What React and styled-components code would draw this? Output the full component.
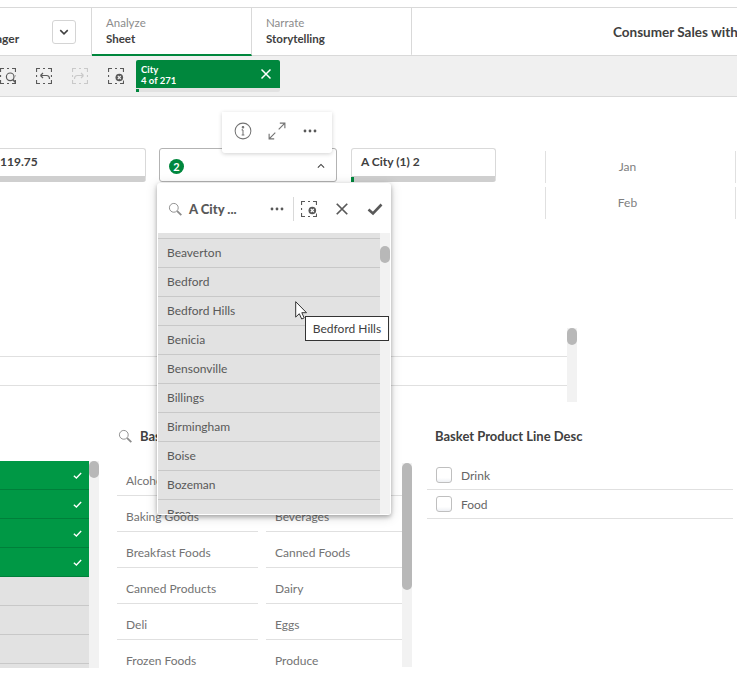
import React from "react";
import styled, { createGlobalStyle } from "styled-components";

const GlobalStyle = createGlobalStyle`
  html, body {
    margin: 0;
    padding: 0;
    background: #fff;
  }
  body {
    font-family: "Lato", "Liberation Sans", sans-serif;
    font-size: 12px;
    color: #404040;
  }
`;

const Page = styled.div`
  position: relative;
  width: 737px;
  height: 674px;
  overflow: hidden;
  background: #fff;
`;

const Header = styled.header`
  display: flex;
  height: 47px;
  margin-top: 7px;
  border-top: 1px solid #d9d9d9;
  border-bottom: 1px solid #d9d9d9;
  box-sizing: content-box;
`;

const ManagerTab = styled.div`
  display: flex;
  align-items: center;
  width: 91px;
  border-right: 1px solid #d9d9d9;
  overflow: hidden;
`;

const ManagerLabel = styled.span`
  width: 56px;
  margin-left: -4px;
  padding-top: 14px;
  font-weight: 700;
  font-size: 12px;
  text-align: left;
  color: #404040;
`;

const MenuButton = styled.div`
  display: flex;
  align-items: center;
  justify-content: center;
  width: 22px;
  height: 22px;
  border: 1px solid #d4d4d4;
  border-radius: 3px;
`;

const Tab = styled.div`
  display: flex;
  flex-direction: column;
  justify-content: center;
  gap: 1px;
  box-sizing: border-box;
  width: 160px;
  height: 48px;
  padding: 0 0 2px 14px;
  border-right: 1px solid #d9d9d9;
  border-bottom: 2px solid ${(p) => (p.$active ? "#00873d" : "transparent")};
  font-size: 11.5px;
`;

const TabKicker = styled.span`
  color: #8c8c8c;
  line-height: 15px;
`;

const TabName = styled.span`
  color: #404040;
  font-weight: 700;
  line-height: 15px;
`;

const AppTitle = styled.div`
  flex: 1;
  padding-left: 201px;
  font-size: 13.5px;
  font-weight: 700;
  line-height: 48px;
  color: #404040;
  white-space: nowrap;
  overflow: hidden;
`;

const Toolbar = styled.div`
  display: flex;
  align-items: center;
  height: 40px;
  border-bottom: 1px solid #d9d9d9;
  background: #f0f0f0;
`;

const ToolIcons = styled.div`
  display: flex;
  gap: 20px;
`;

const Pill = styled.div`
  position: relative;
  display: flex;
  align-items: center;
  justify-content: space-between;
  box-sizing: border-box;
  width: 144px;
  height: 32px;
  margin-left: 12px;
  padding: 0 8px 0 5px;
  border-bottom: 4px solid #e2e2e2;
  border-radius: 2px;
  background: #00873d;
  background-clip: padding-box;
  color: #fff;

  &::after {
    content: "";
    position: absolute;
    left: 0;
    bottom: -4px;
    width: 3px;
    height: 3px;
    background: #00873d;
  }
`;

const PillText = styled.div`
  display: flex;
  flex-direction: column;
  padding-top: 2px;
  font-size: 9.5px;
  font-weight: 700;
  line-height: 11.5px;
`;

const FilterRow = styled.div`
  display: flex;
  align-items: flex-start;
  height: 72px;
  margin-top: 51px;
`;

const FilterBox = styled.div`
  position: relative;
  display: flex;
  align-items: center;
  justify-content: space-between;
  flex-shrink: 0;
  box-sizing: border-box;
  width: ${(p) => p.$width}px;
  height: 34px;
  margin: 0 ${(p) => p.$after || 0}px 0 ${(p) => p.$before || 0}px;
  padding: ${(p) => (p.$open ? "2px 10px 0 9px" : "0 10px 2px 9px")};
  border: 1px solid ${(p) => (p.$open ? "#b3b3b3" : "#d9d9d9")};
  border-bottom-width: ${(p) => (p.$open ? 1 : 6)}px;
  border-bottom-color: ${(p) => (p.$open ? "#b3b3b3" : "#cfcfcf")};
  border-radius: 3px;
  background: #fff;
  font-size: 12px;
  font-weight: 700;
  color: #404040;
`;

const ProgressMark = styled.span`
  position: absolute;
  left: -1px;
  bottom: -6px;
  width: 3px;
  height: 5px;
  background: #00873d;
`;

const Badge = styled.span`
  display: flex;
  align-items: center;
  justify-content: center;
  width: 15px;
  height: 15px;
  border-radius: 50%;
  background: #00873d;
  color: #fff;
  font-size: 11px;
  font-weight: 700;
`;

const Months = styled.div`
  display: flex;
  flex-direction: column;
  gap: 4px;
  margin: 3px 0 0 49px;
`;

const MonthCell = styled.div`
  box-sizing: border-box;
  width: 191px;
  height: 32px;
  border-left: 1px solid #e0e0e0;
  border-right: 1px solid #e0e0e0;
  padding: 8px 26px 0 0;
  text-align: center;
  font-size: 12px;
  color: #808080;
  line-height: 16px;
`;

const TableArea = styled.section`
  display: flex;
  width: 577px;
  height: 182px;
`;

const TableRows = styled.div`
  flex: 1;
  padding-top: 136px;
`;

const TableRow = styled.div`
  height: 28px;
  border-top: 1px solid #e0e0e0;
`;

const ScrollTrack = styled.div`
  flex-shrink: 0;
  box-sizing: border-box;
  width: 10px;
  height: ${(p) => p.$height}px;
  margin-top: ${(p) => p.$top || 0}px;
  background: #f2f2f2;
`;

const ScrollThumb = styled.div`
  width: 10px;
  height: ${(p) => p.$height}px;
  margin-top: ${(p) => p.$offset || 0}px;
  border-radius: 5px;
  background: #b8b8b8;
`;

const Bottom = styled.section`
  display: flex;
  align-items: flex-start;
  height: 272px;
`;

const SelectedPanel = styled.div`
  display: flex;
  width: 99px;
  height: 207px;
  margin-top: 59px;
  margin-right: 18px;
`;

const SelectedRows = styled.div`
  width: 89px;
  height: 207px;
  overflow: hidden;
`;

const ValueRow = styled.div`
  display: flex;
  align-items: center;
  justify-content: flex-end;
  box-sizing: border-box;
  height: 29px;
  padding-right: 7px;
  border-bottom: 1px solid ${(p) => (p.$selected ? "#007f3a" : "#c8c8c8")};
  background: ${(p) => (p.$selected ? "#009845" : "#e2e2e2")};
`;

const GroupPanel = styled.div`
  width: 295px;
  margin-right: 15px;
`;

const PanelTitle = styled.div`
  display: flex;
  align-items: center;
  gap: 7px;
  box-sizing: border-box;
  height: 58px;
  padding: 26px 0 16px ${(p) => p.$inset || 0}px;
  font-size: 13px;
  font-weight: 700;
  color: #404040;
`;

const GroupBody = styled.div`
  display: flex;
  height: 207px;
  overflow: hidden;
`;

const GroupColumn = styled.div`
  flex-shrink: 0;
  width: ${(p) => p.$width}px;
  margin-right: ${(p) => p.$after || 0}px;
`;

const GroupItem = styled.div`
  box-sizing: border-box;
  height: 36px;
  padding-left: 9px;
  border-bottom: 1px solid #e0e0e0;
  font-size: 12px;
  line-height: 41px;
  color: #737373;
  white-space: nowrap;
`;

const LinePanel = styled.div`
  width: 306px;
`;

const LineRows = styled.div`
  padding-top: 1px;
`;

const LineRow = styled.div`
  display: flex;
  align-items: center;
  gap: 9px;
  box-sizing: border-box;
  height: 29px;
  padding-left: 9px;
  border-bottom: 1px solid #e0e0e0;
  font-size: 12px;
  color: #666;
`;

const CheckBox = styled.span`
  box-sizing: border-box;
  width: 16px;
  height: 16px;
  border: 1px solid #bfbfbf;
  border-radius: 3px;
  background: linear-gradient(#fff 70%, #eef0f4);
`;

const ObjectTools = styled.div`
  position: absolute;
  left: 222px;
  top: 112px;
  display: flex;
  align-items: center;
  gap: 16px;
  box-sizing: border-box;
  width: 110px;
  height: 41px;
  padding: 0 0 4px 12px;
  border-radius: 0 0 3px 3px;
  background: #fff;
  box-shadow: 0 1px 4px rgba(0, 0, 0, 0.18);
`;

const Popover = styled.div`
  position: absolute;
  left: 157px;
  top: 183px;
  box-sizing: border-box;
  width: 234px;
  height: 332px;
  padding: 0 1px;
  border-radius: 3px;
  background: #fff;
  box-shadow: 0 2px 4px rgba(0, 0, 0, 0.28), 0 2px 12px rgba(0, 0, 0, 0.16);
`;

const PopoverHead = styled.div`
  display: flex;
  align-items: center;
  box-sizing: border-box;
  height: 50px;
  padding: 2px 0 0 10px;
`;

const PopoverTitle = styled.span`
  width: 80px;
  margin-left: 6px;
  font-size: 13px;
  font-weight: 900;
  color: #595959;
  white-space: nowrap;
`;

const HeadDivider = styled.span`
  width: 1px;
  height: 24px;
  margin: 0 7px 0 8px;
  background: #d9d9d9;
`;

const HeadActions = styled.div`
  display: flex;
  align-items: center;
  gap: 18px;
`;

const PopoverBody = styled.div`
  display: flex;
  height: 281px;
  overflow: hidden;
  background: #f2f2f2;
`;

const CityList = styled.div`
  width: 222px;
  height: 281px;
  overflow: hidden;
  background: #e2e2e2;
`;

const CityRow = styled.div`
  box-sizing: border-box;
  height: 29px;
  padding-left: 9px;
  border-bottom: 1px solid #c8c8c8;
  font-size: 12px;
  line-height: 28px;
  color: #595959;

  &:first-child {
    height: 6px;
  }
`;

const Tooltip = styled.div`
  position: absolute;
  left: 305px;
  top: 316px;
  box-sizing: border-box;
  width: 84px;
  height: 25px;
  border: 1px solid #333;
  background: #fff;
  font-size: 12px;
  line-height: 23px;
  text-align: center;
  color: #404040;
`;

const Cursor = styled.svg`
  position: absolute;
  left: 295px;
  top: 301px;
`;

const Glyph = ({ size = 16, children, color = "#595959", sw = 1.2 }) => (
  <svg width={size} height={size} viewBox="0 0 16 16" fill="none" stroke={color} strokeWidth={sw}>
    {children}
  </svg>
);

const FRAME = "M.5 4V.5H4M7 .5h2M12 .5h3.5V4M15.5 7v2M15.5 12v3.5H12M9 15.5H7M4 15.5H.5V12M.5 9V7";

const SelectFrame = ({ color, children }) => (
  <Glyph color={color}>
    <path d={FRAME} />
    {children}
  </Glyph>
);

const SearchSmall = ({ color = "#8c8c8c" }) => (
  <Glyph size={15} color={color} sw={1}>
    <circle cx="6.2" cy="6.2" r="4.7" />
    <path d="M9.8 9.8l4.4 4.2" strokeWidth="2" />
  </Glyph>
);

const ClearMark = ({ bg = "#f0f0f0" }) => (
  <>
    <circle cx="11.3" cy="9.5" r="5.2" fill={bg} stroke="none" />
    <circle cx="11.3" cy="9.5" r="3.8" fill="#595959" stroke="none" />
    <path d="M9.8 8l3 3M12.8 8l-3 3" stroke={bg} strokeWidth="1.1" />
  </>
);

const Cross = ({ size = 14, color = "#595959", sw = 2 }) => (
  <Glyph size={size} color={color} sw={sw}>
    <path d="M2 2l12 12M14 2L2 14" />
  </Glyph>
);

const Dots = () => (
  <Glyph>
    <circle cx="3" cy="8" r="1.4" fill="#595959" stroke="none" />
    <circle cx="8" cy="8" r="1.4" fill="#595959" stroke="none" />
    <circle cx="13" cy="8" r="1.4" fill="#595959" stroke="none" />
  </Glyph>
);

const Tick = ({ size = 16, color = "#595959", sw = 2.6 }) => (
  <Glyph size={size} color={color} sw={sw}>
    <path d="M1.5 8.5l4.5 4 8.5-9" />
  </Glyph>
);

const CITIES = ["", "Beaverton", "Bedford", "Bedford Hills", "Benicia", "Bensonville", "Billings", "Birmingham", "Boise", "Bozeman", "Brea"];
const GROUP_A = ["Alcoholic Beverages", "Baking Goods", "Breakfast Foods", "Canned Products", "Deli", "Frozen Foods"];
const GROUP_B = ["Baked Goods", "Beverages", "Canned Foods", "Dairy", "Eggs", "Produce"];

export default function App() {
  return (
    <Page>
      <GlobalStyle />
      <Header>
        <ManagerTab>
          <ManagerLabel>ager</ManagerLabel>
          <MenuButton>
            <Glyph size={12} color="#404040" sw={2}>
              <path d="M3 5.5l5 5 5-5" />
            </Glyph>
          </MenuButton>
        </ManagerTab>
        <Tab $active>
          <TabKicker>Analyze</TabKicker>
          <TabName>Sheet</TabName>
        </Tab>
        <Tab>
          <TabKicker>Narrate</TabKicker>
          <TabName>Storytelling</TabName>
        </Tab>
        <AppTitle>Consumer Sales with</AppTitle>
      </Header>

      <Toolbar>
        <ToolIcons>
          <SelectFrame>
            <circle cx="10.5" cy="9" r="5.4" fill="#f0f0f0" stroke="none" />
            <circle cx="10.2" cy="8.8" r="3.8" />
            <path d="M12.8 11.6l3 3" strokeWidth="1.6" />
          </SelectFrame>
          <SelectFrame>
            <path d="M4.5 7.5h6c2 0 3 1.3 3 3.5M4.5 7.5l2.5-2.5M4.5 7.5L7 10" />
          </SelectFrame>
          <SelectFrame color="#c9c9c9">
            <path d="M11.5 7.5h-6c-2 0-3 1.3-3 3.5M11.5 7.5L9 5M11.5 7.5L9 10" />
          </SelectFrame>
          <SelectFrame>
            <ClearMark />
          </SelectFrame>
        </ToolIcons>
        <Pill>
          <PillText>
            <span>City</span>
            <span>4 of 271</span>
          </PillText>
          <Cross size={12} color="#fff" />
        </Pill>
      </Toolbar>

      <FilterRow>
        <FilterBox $width={156} $before={-10} $after={13}>
          119.75
        </FilterBox>
        <FilterBox $width={178} $after={14} $open>
          <Badge>2</Badge>
          <Glyph size={10} color="#404040" sw={1.8}>
            <path d="M3 10.5l5-5 5 5" />
          </Glyph>
        </FilterBox>
        <FilterBox $width={145}>
          A City (1) 2
          <ProgressMark />
        </FilterBox>
        <Months>
          <MonthCell>Jan</MonthCell>
          <MonthCell>Feb</MonthCell>
        </Months>
      </FilterRow>

      <TableArea>
        <TableRows>
          <TableRow />
          <TableRow />
        </TableRows>
        <ScrollTrack $top={108} $height={74}>
          <ScrollThumb $height={17} />
        </ScrollTrack>
      </TableArea>

      <Bottom>
        <SelectedPanel>
          <SelectedRows>
            {[0, 1, 2, 3].map((i) => (
              <ValueRow key={i} $selected>
                <Tick size={9} color="#fff" sw={2.4} />
              </ValueRow>
            ))}
            {[4, 5, 6, 7].map((i) => (
              <ValueRow key={i} />
            ))}
          </SelectedRows>
          <ScrollTrack $height={207}>
            <ScrollThumb $height={17} />
          </ScrollTrack>
        </SelectedPanel>

        <GroupPanel>
          <PanelTitle $inset={1}>
            <SearchSmall />
            Basket Product
          </PanelTitle>
          <GroupBody>
            <GroupColumn $width={141} $after={8}>
              {GROUP_A.map((g) => (
                <GroupItem key={g}>{g}</GroupItem>
              ))}
            </GroupColumn>
            <GroupColumn $width={136}>
              {GROUP_B.map((g) => (
                <GroupItem key={g}>{g}</GroupItem>
              ))}
            </GroupColumn>
            <ScrollTrack $height={204} $top={3}>
              <ScrollThumb $height={127} />
            </ScrollTrack>
          </GroupBody>
        </GroupPanel>

        <LinePanel>
          <PanelTitle $inset={8}>Basket Product Line Desc</PanelTitle>
          <LineRows>
            <LineRow>
              <CheckBox />
              Drink
            </LineRow>
            <LineRow>
              <CheckBox />
              Food
            </LineRow>
          </LineRows>
        </LinePanel>
      </Bottom>

      <ObjectTools>
        <Glyph size={18} color="#737373" sw={0.9}>
          <circle cx="8" cy="8" r="7" />
          <path d="M8 7v4.5M6.8 11.5h2.4M6.8 7H8" />
          <circle cx="8" cy="4.6" r="0.7" fill="#737373" />
        </Glyph>
        <Glyph size={18} color="#737373" sw={1}>
          <path d="M9.5 6.5L15 1M10.5 1H15v4.5M6.5 9.5L1 15M1 10.5V15h4.5" />
        </Glyph>
        <Dots />
      </ObjectTools>

      <Popover>
        <PopoverHead>
          <SearchSmall />
          <PopoverTitle>A City ...</PopoverTitle>
          <Dots />
          <HeadDivider />
          <HeadActions>
            <SelectFrame>
              <ClearMark bg="#fff" />
            </SelectFrame>
            <Cross />
            <Tick />
          </HeadActions>
        </PopoverHead>
        <PopoverBody>
          <CityList>
            {CITIES.map((c, i) => (
              <CityRow key={i}>{c}</CityRow>
            ))}
          </CityList>
          <ScrollTrack $height={281}>
            <ScrollThumb $height={17} $offset={13} />
          </ScrollTrack>
        </PopoverBody>
      </Popover>

      <Cursor width="12" height="19" viewBox="0 0 12 19">
        <path d="M.7.7v15.4l3.6-3.4 2.4 5.3 2.5-1.1-2.4-5.2h4.7z" fill="#fff" stroke="#333" strokeWidth="1" />
      </Cursor>
      <Tooltip>Bedford Hills</Tooltip>
    </Page>
  );
}
